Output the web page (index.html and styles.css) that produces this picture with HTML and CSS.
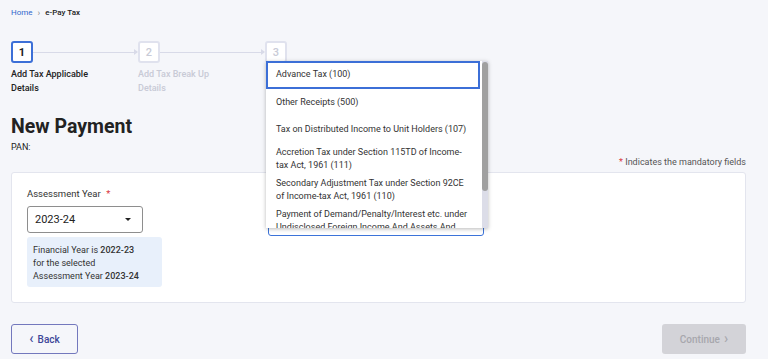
FILE: index.html
```html
<!DOCTYPE html>
<html lang="en">
<head>
<meta charset="utf-8">
<title>e-Pay Tax - New Payment</title>
<link rel="stylesheet" href="styles.css">
</head>
<body>
<div class="page">
  <nav class="breadcrumb">
    <a class="crumb-link" href="#">Home</a>
    <span class="crumb-sep">&#8250;</span>
    <span class="crumb-current">e-Pay Tax</span>
  </nav>

  <div class="stepper">
    <div class="step step-active">
      <div class="step-head">
        <div class="step-box">1</div>
        <div class="step-line"><span class="arrow"></span></div>
      </div>
      <div class="step-label">Add Tax Applicable Details</div>
    </div>
    <div class="step">
      <div class="step-head">
        <div class="step-box">2</div>
        <div class="step-line"><span class="arrow"></span></div>
      </div>
      <div class="step-label">Add Tax Break Up Details</div>
    </div>
    <div class="step step-last">
      <div class="step-head">
        <div class="step-box">3</div>
      </div>
    </div>
  </div>

  <h1 class="title">New Payment</h1>
  <div class="pan">PAN:</div>
  <div class="mandatory"><span class="req">*</span> Indicates the mandatory fields</div>

  <section class="card">
    <div class="fields">
      <div class="field field-ay">
        <label class="field-label">Assessment Year <span class="req">*</span></label>
        <div class="select">
          <span>2023-24</span>
          <span class="caret"></span>
        </div>
        <div class="info">Financial Year is <b>2022-23</b><br>for the selected<br>Assessment Year <b>2023-24</b></div>
      </div>
      <div class="field field-type">
        <div class="field-label field-label-empty"></div>
        <div class="select select-focus" aria-label="Type of Payment (Minor Head)"></div>
        <div class="dropdown">
          <ul class="options">
            <li class="option option-active">Advance Tax (100)</li>
            <li class="option">Other Receipts (500)</li>
            <li class="option">Tax on Distributed Income to Unit Holders (107)</li>
            <li class="option">Accretion Tax under Section 115TD of Income-tax Act, 1961 (111)</li>
            <li class="option">Secondary Adjustment Tax under Section 92CE of Income-tax Act, 1961 (110)</li>
            <li class="option">Payment of Demand/Penalty/Interest etc. under Undisclosed Foreign Income And Assets And Imposition of Tax Act, 2015</li>
          </ul>
          <div class="scrollbar"><div class="thumb"></div></div>
        </div>
      </div>
    </div>
  </section>

  <div class="actions">
    <button class="btn btn-back"><span class="chev">&#8249;</span> Back</button>
    <button class="btn btn-continue">Continue <span class="chev">&#8250;</span></button>
  </div>
</div>
</body>
</html>
```

FILE: styles.css
```css
* { box-sizing: border-box; }
html, body { margin: 0; padding: 0; }
body {
  background: #f5f6fa;
  font-family: Roboto, "Liberation Sans", Arial, sans-serif;
  color: #222;
  width: 768px;
  height: 359px;
  overflow: hidden;
}
.page {
  padding: 7px 22px 0 11px;
}

/* breadcrumb */
.breadcrumb {
  font-size: 8px;
  line-height: 12px;
  display: flex;
  align-items: center;
  gap: 5px;
}
.crumb-link { color: #2f66cc; text-decoration: none; }
.crumb-sep { color: #888; font-size: 9px; }
.crumb-current { color: #222; font-weight: 500; }

/* stepper */
.stepper {
  display: flex;
  margin-top: 22px;
}
.step { width: 127px; }
.step-last { width: 30px; }
.step-head {
  display: flex;
  align-items: center;
  height: 22px;
}
.step-box {
  width: 22px;
  height: 22px;
  flex: none;
  border: 2px solid #e0e2ee;
  border-radius: 3px;
  background: #fff;
  color: #c9cbd7;
  font-size: 11px;
  font-weight: 500;
  display: flex;
  align-items: center;
  justify-content: center;
}
.step-active .step-box {
  border-color: #3c6fd7;
  color: #222;
  font-weight: 700;
}
.step-line {
  flex: 1;
  height: 1px;
  background: #d8dae8;
  position: relative;
  margin-right: 1px;
}
.step-line .arrow {
  position: absolute;
  right: -1px;
  top: -3px;
  width: 0;
  height: 0;
  border-left: 4px solid #d8dae8;
  border-top: 3.5px solid transparent;
  border-bottom: 3.5px solid transparent;
}
.step-label {
  margin-top: 5px;
  width: 100px;
  font-size: 9px;
  line-height: 13.5px;
  font-weight: 500;
  color: #c8cad6;
}
.step-active .step-label { color: #222; }

/* header */
.title {
  margin: 20px 0 0;
  font-size: 19.5px;
  line-height: 24px;
  font-weight: 700;
  color: #222;
}
.pan {
  margin-top: 2px;
  font-size: 9px;
  line-height: 12px;
  color: #222;
}
.mandatory {
  margin-top: 3px;
  text-align: right;
  font-size: 9px;
  line-height: 12px;
  color: #555;
}
.req { color: #d9363e; }

/* card */
.card {
  margin-top: 4px;
  background: #fff;
  border: 1px solid #e3e5ee;
  border-radius: 3px;
  height: 131px;
  padding: 15px 15px 0;
}
.fields {
  display: flex;
  align-items: flex-start;
  gap: 25px;
}
.field { width: 216px; position: relative; }
.field-label {
  display: block;
  font-size: 9.5px;
  line-height: 12px;
  color: #333;
}
.field-label-empty { height: 12px; }
.field-label .req { margin-left: 3px; }
.select {
  margin-top: 6px;
  height: 27px;
  width: 116px;
  border: 1px solid #8e8e8e;
  border-radius: 3px;
  display: flex;
  align-items: center;
  justify-content: space-between;
  padding: 0 11px 0 7px;
  font-size: 11px;
  color: #222;
  background: #fff;
}
.caret {
  width: 0;
  height: 0;
  border-top: 3.5px solid #222;
  border-left: 3px solid transparent;
  border-right: 3px solid transparent;
}
.select-focus {
  width: 216px;
  height: 30px;
  border-color: #3c73d9;
}
.info {
  margin-top: 4px;
  width: 135px;
  height: 50px;
  background: #e8f0fb;
  border-radius: 3px;
  padding: 7px 6px 4px;
  font-size: 9px;
  line-height: 13px;
  color: #333;
}
.info b { font-weight: 500; }

/* dropdown menu overlaying the focused select */
.dropdown {
  position: absolute;
  left: -2px;
  bottom: 8px;
  width: 222px;
  height: 167px;
  background: #fff;
  box-shadow: 0 1px 4px rgba(0, 0, 0, 0.28);
  overflow: hidden;
  display: flex;
}
.options {
  list-style: none;
  margin: 0;
  padding: 0;
  width: 214px;
}
.option {
  min-height: 27.5px;
  padding: 2px 10px;
  display: flex;
  align-items: center;
  font-size: 9px;
  line-height: 13.5px;
  color: #333;
}
.option-active {
  outline: 2px solid #3c6fd7;
  outline-offset: -2px;
}
.scrollbar {
  margin-left: 2px;
  width: 6px;
  background: #dcdde8;
  position: relative;
}
.thumb {
  position: absolute;
  top: 1px;
  left: 0;
  right: 0;
  height: 129px;
  background: #a0a0a0;
  border-radius: 3px;
}

/* actions */
.actions {
  margin-top: 21px;
  display: flex;
  justify-content: space-between;
}
.btn {
  height: 30px;
  border-radius: 3px;
  font-family: Roboto, "Liberation Sans", Arial, sans-serif;
  font-size: 10px;
  font-weight: 500;
  display: flex;
  align-items: center;
  justify-content: center;
  gap: 4px;
}
.btn .chev { font-size: 14px; line-height: 10px; margin-top: -2px; }
.btn-back {
  width: 67px;
  border: 1px solid #7378bd;
  background: transparent;
  color: #3d4699;
}
.btn-continue {
  width: 84px;
  border: none;
  background: #d3d3d8;
  color: #a7a7ad;
}
```
